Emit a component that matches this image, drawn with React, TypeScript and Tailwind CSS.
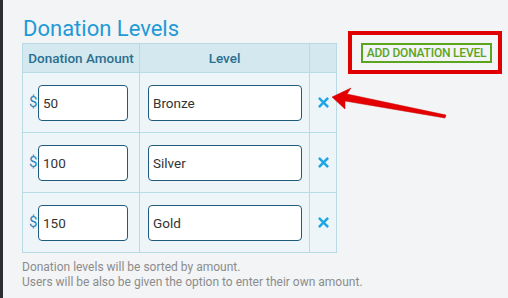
import { useState } from 'react';

type Level = { amount: string; name: string };

const initial: Level[] = [
  { amount: '50', name: 'Bronze' },
  { amount: '100', name: 'Silver' },
  { amount: '150', name: 'Gold' },
];

function RemoveIcon() {
  return (
    <svg viewBox="0 0 12 12" className="w-[11px] h-[11px]">
      <path d="M2 2 L10 10 M10 2 L2 10" stroke="#1ea6e4" strokeWidth="2.8" strokeLinecap="square" />
    </svg>
  );
}

export default function App() {
  const [levels, setLevels] = useState<Level[]>(initial);

  const update = (i: number, key: keyof Level, value: string) =>
    setLevels(levels.map((l, j) => (j === i ? { ...l, [key]: value } : l)));

  return (
    <div className="relative flex w-[508px] h-[298px] bg-[#f2f4f6] overflow-hidden" style={{ fontFamily: 'Roboto, sans-serif' }}>
      <div className="w-[3px] bg-[#2b2f34] shrink-0" />

      <div className="flex flex-col pl-[19px] pt-[16px] w-[334px] shrink-0">
        <h2 className="text-[22px] leading-[26px] text-[#1f9ad6] ml-[1px] whitespace-nowrap">Donation Levels</h2>

        <table className="mt-[1px] border-collapse table-fixed w-[315px]">
          <thead>
            <tr className="bg-[#d3e8ef] h-[29px]">
              <th className="w-[117px] border border-[#b6dbe5] text-[13.5px] font-medium text-[#2b6f90] whitespace-nowrap p-0">Donation Amount</th>
              <th className="w-[170px] border border-[#b6dbe5] text-[13.5px] font-medium text-[#2b6f90] p-0">Level</th>
              <th className="border border-[#b6dbe5] p-0" />
            </tr>
          </thead>
          <tbody>
            {levels.map((l, i) => (
              <tr key={i} className="bg-[#eef5f9] h-[60px]">
                <td className="border border-[#b6dbe5] pl-[6px]">
                  <div className="flex items-center">
                    <span className="text-[15px] text-[#2686bf] w-[9px]">$</span>
                    <input
                      value={l.amount}
                      onChange={e => update(i, 'amount', e.target.value)}
                      className="w-[90px] h-[36px] bg-white border border-[#1f5b7c] rounded-[4px] px-[4px] text-[13.5px] text-[#333] outline-none"
                    />
                  </div>
                </td>
                <td className="border border-[#b6dbe5] px-[8px]">
                  <input
                    value={l.name}
                    onChange={e => update(i, 'name', e.target.value)}
                    className="w-[154px] h-[36px] bg-white border border-[#1f5b7c] rounded-[4px] px-[4px] text-[13.5px] text-[#333] outline-none"
                  />
                </td>
                <td className="border border-[#b6dbe5] text-center align-middle p-0">
                  <button
                    onClick={() => setLevels(levels.filter((_, j) => j !== i))}
                    className="inline-flex items-center justify-center -mt-[6px]"
                  >
                    <RemoveIcon />
                  </button>
                </td>
              </tr>
            ))}
          </tbody>
        </table>

        <div className="mt-[7px] text-[12px] leading-[15px] text-[#8c8c8c] whitespace-nowrap">
          <p>Donation levels will be sorted by amount.</p>
          <p>Users will be also be given the option to enter their own amount.</p>
        </div>
      </div>

      <div className="ml-[11px] mt-[31px] self-start w-[154px] h-[43px] shrink-0 border-[4px] border-[#e10000] flex items-center justify-center">
        <button
          onClick={() => setLevels([...levels, { amount: '', name: '' }])}
          className="h-[20px] px-[4px] border-2 border-[#5ba41e] text-[12px] leading-[16px] font-medium text-[#5ba41e] tracking-[-0.2px] ml-[3px] whitespace-nowrap"
        >
          ADD DONATION LEVEL
        </button>
      </div>

      <svg className="absolute left-0 top-0 pointer-events-none" width="508" height="298">
        <polygon
          points="332,97 351,88 347,94 446,115 445,118 345,101 345,109"
          fill="#e40000"
          stroke="#c80000"
          strokeWidth="0.5"
          strokeLinejoin="round"
        />
      </svg>
    </div>
  );
}
